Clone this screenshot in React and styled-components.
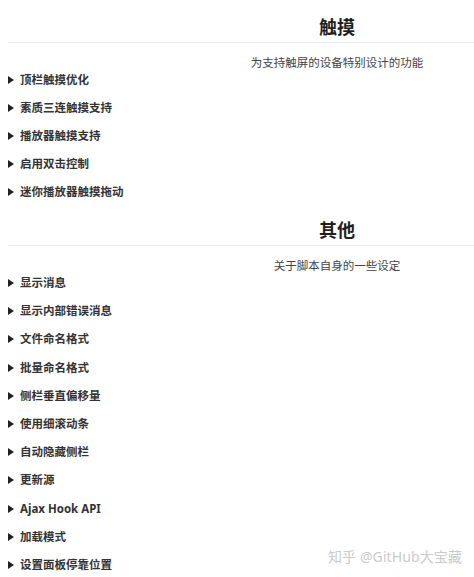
import styled, { createGlobalStyle } from "styled-components";

const GlobalStyle = createGlobalStyle`
  html, body {
    margin: 0;
    padding: 0;
    background: #fff;
    overflow: hidden;
  }
  body {
    font-family: "Noto Sans", "Noto Sans CJK SC", sans-serif;
    color: #222;
  }
`;

const Page = styled.div`
  position: relative;
  width: 474px;
  height: 577px;
  overflow: hidden;
`;

const Panel = styled.div`
  width: 658px;
  margin-left: 8px;
  padding-top: 15px;
  display: flex;
  flex-direction: column;
  row-gap: 18px;
`;

const Section = styled.section`
  display: flex;
  flex-direction: column;
`;

const Heading = styled.h2`
  margin: 0;
  font-size: 18px;
  line-height: 24px;
  font-weight: bold;
  text-align: center;
  color: #1f1f1f;
  padding-bottom: 3px;
  border-bottom: 1px solid #ececec;
`;

const Subtitle = styled.p`
  margin: 12px 0 0;
  font-size: 11.5px;
  line-height: 16px;
  text-align: center;
  color: #444;
`;

const List = styled.div`
  display: flex;
  flex-direction: column;
  row-gap: ${(p) => p.$gap}px;
  margin-top: 1px;
`;

const Item = styled.div`
  display: flex;
  align-items: center;
  column-gap: 6px;
  font-size: 11.5px;
  line-height: 16px;
  font-weight: bold;
  color: #333;
`;

const Marker = styled.span`
  width: 0;
  height: 0;
  border-left: 6px solid #222;
  border-top: 4px solid transparent;
  border-bottom: 4px solid transparent;
`;

const Watermark = styled.div`
  position: absolute;
  right: 12px;
  bottom: 11px;
  font-size: 14px;
  line-height: 18px;
  color: #cbcbcb;
  letter-spacing: 0.1px;
`;

const sections = [
  {
    title: "触摸",
    desc: "为支持触屏的设备特别设计的功能",
    gap: 12,
    items: ["顶栏触摸优化", "素质三连触摸支持", "播放器触摸支持", "启用双击控制", "迷你播放器触摸拖动"],
  },
  {
    title: "其他",
    desc: "关于脚本自身的一些设定",
    gap: 12.2,
    items: [
      "显示消息",
      "显示内部错误消息",
      "文件命名格式",
      "批量命名格式",
      "侧栏垂直偏移量",
      "使用细滚动条",
      "自动隐藏侧栏",
      "更新源",
      "Ajax Hook API",
      "加载模式",
      "设置面板停靠位置",
    ],
  },
];

export default function App() {
  return (
    <Page>
      <GlobalStyle />
      <Panel>
        {sections.map((s) => (
          <Section key={s.title}>
            <Heading>{s.title}</Heading>
            <Subtitle>{s.desc}</Subtitle>
            <List $gap={s.gap}>
              {s.items.map((item) => (
                <Item key={item}>
                  <Marker />
                  {item}
                </Item>
              ))}
            </List>
          </Section>
        ))}
      </Panel>
      <Watermark>知乎 @GitHub大宝藏</Watermark>
    </Page>
  );
}
